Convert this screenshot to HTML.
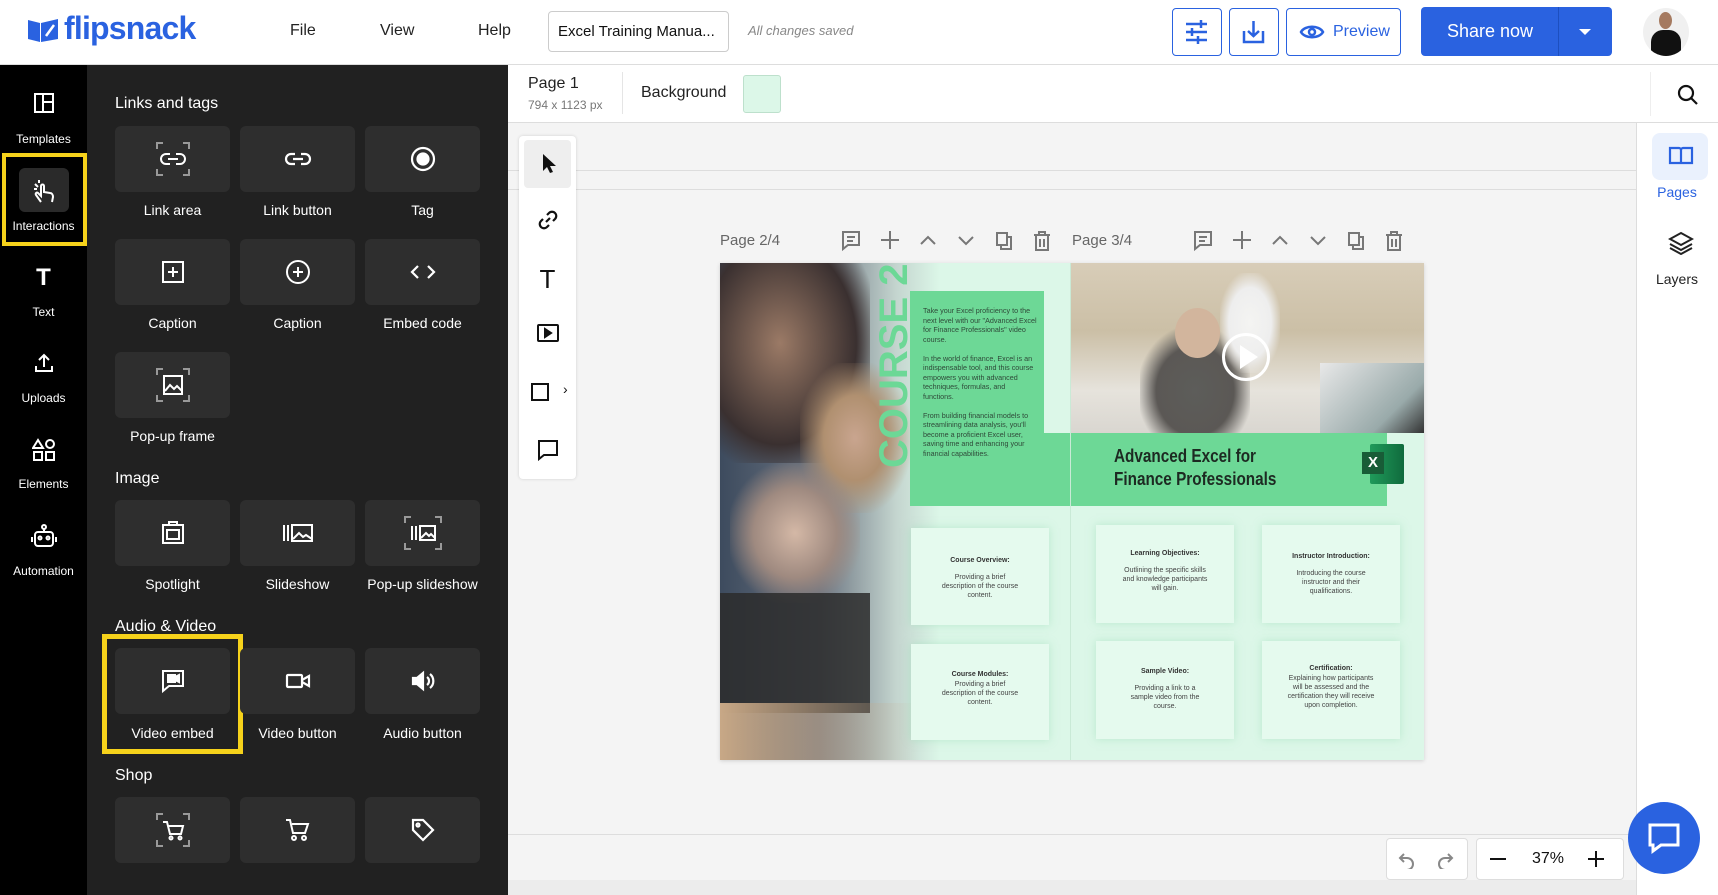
<!DOCTYPE html>
<html><head><meta charset="utf-8"><style>
*{box-sizing:border-box;margin:0;padding:0}
body{width:1718px;height:895px;overflow:hidden;font-family:"Liberation Sans",sans-serif;background:#f4f4f4;position:relative}
.abs{position:absolute}
.top{left:0;top:0;width:1718px;height:65px;background:#fff;border-bottom:1px solid #ddd}
.nav{font-size:16px;color:#222;top:22px}
.rail{left:0;top:65px;width:87px;height:830px;background:#000}
.ri{position:absolute;left:0;width:87px;text-align:center;color:#fff;font-size:12px}
.panel{left:87px;top:65px;width:421px;height:830px;background:#212121}
.h{position:absolute;left:28px;color:#fff;font-size:16px}
.tile{position:absolute;width:115px;height:66px;background:#2e2e2e;border-radius:6px;display:flex;align-items:center;justify-content:center}
.lbl{position:absolute;width:115px;text-align:center;color:#fff;font-size:14px}
.btn{border:1.5px solid #2a62e0;border-radius:4px;background:#fff}
.card{position:absolute;background:#e5faee;box-shadow:0 0 8px rgba(150,220,180,.5);text-align:center;font-size:7px;color:#444;padding-top:28px;line-height:9px}
.card b{display:block;margin-bottom:8px;color:#333}
.tool{position:absolute;left:0;width:57px;display:flex;justify-content:center}
</style></head><body>
<div class="abs top"></div>
<svg class="abs" style="left:27px;top:17px" width="34" height="26" viewBox="0 0 34 26"><path d="M1 3 L13 6 L13 25 L1 22Z" fill="#2a62e0"/><path d="M14 6 L31 2 L31 22 L14 25Z" fill="#2a62e0"/><path d="M19 19 L27 8" stroke="#fff" stroke-width="2.5"/></svg>
<div class="abs" style="left:64px;top:10px;font-size:32px;font-weight:bold;color:#2a62e0;letter-spacing:-0.8px">flipsnack</div>
<div class="abs nav" style="left:290px">File</div>
<div class="abs nav" style="left:380px">View</div>
<div class="abs nav" style="left:478px">Help</div>
<div class="abs" style="left:548px;top:11px;width:181px;height:41px;border:1px solid #ccc;border-radius:4px;font-size:15px;padding:11px 9px;color:#111">Excel Training Manua...</div>
<div class="abs" style="left:748px;top:23px;font-size:13px;color:#888;font-style:italic">All changes saved</div>
<div class="abs btn" style="left:1172px;top:8px;width:50px;height:48px"><svg width="47" height="45" viewBox="0 0 47 45"><g stroke="#2a62e0" stroke-width="2.5"><path d="M13 15h21M13 23h21M13 31h21"/><path d="M28 11v8M19 19v8M25 27v8"/></g></svg></div>
<div class="abs btn" style="left:1229px;top:8px;width:50px;height:48px"><svg width="47" height="45" viewBox="0 0 47 45" fill="none" stroke="#2a62e0" stroke-width="2.5"><path d="M14 22v11h19V22M23.5 12v15M18 22l5.5 5 5.5-5"/></svg></div>
<div class="abs btn" style="left:1286px;top:8px;width:115px;height:48px"><svg class="abs" style="left:12px;top:13px" width="26" height="20" viewBox="0 0 26 20" fill="none" stroke="#2a62e0" stroke-width="2.5"><path d="M2 10C6 3 20 3 24 10C20 17 6 17 2 10Z"/><circle cx="13" cy="10" r="3"/></svg><span class="abs" style="left:46px;top:14px;color:#2a62e0;font-size:16px">Preview</span></div>
<div class="abs" style="left:1421px;top:7px;width:191px;height:49px;background:#2a62e0;border-radius:4px"><span class="abs" style="left:26px;top:14px;color:#fff;font-size:18px">Share now</span><div class="abs" style="left:137px;top:0;width:1px;height:49px;background:#1d4fc0"></div><div class="abs" style="left:158px;top:22px;border:6px solid transparent;border-top:6px solid #fff;border-bottom:0"></div></div>
<div class="abs" style="left:1643px;top:8px;width:46px;height:48px;border-radius:50%;background:#f0f0f0;overflow:hidden"><div class="abs" style="left:16px;top:4px;width:13px;height:17px;border-radius:50%;background:#a57a60"></div><div class="abs" style="left:8px;top:22px;width:30px;height:30px;border-radius:12px 12px 0 0;background:#111"></div></div>

<div class="abs rail"></div>
<div class="ri" style="top:92px"><svg width="22" height="22" viewBox="0 0 22 22" fill="none" stroke="#fff" stroke-width="2"><rect x="2" y="2" width="18" height="18"/><path d="M10 2v18M10 10h10"/></svg></div>
<div class="ri" style="top:132px">Templates</div>
<div class="abs" style="left:2px;top:153px;width:85px;height:93px;border:4px solid #f6d21b"></div>
<div class="abs" style="left:19px;top:168px;width:50px;height:44px;background:#2a2a2a;border-radius:6px"></div>
<div class="ri" style="top:178px"><svg width="28" height="26" viewBox="0 0 28 26" fill="none" stroke="#fff" stroke-width="2"><path d="M11 24l-5-7c-1-2 1-3 2-2l3 3V8c0-2 3-2 3 0v6l6 1c2 0 3 2 3 4l-1 5"/><path d="M5 6l3 3M4 11h3M9 2v3"/></svg></div>
<div class="ri" style="top:219px">Interactions</div>
<div class="ri" style="top:264px;font-size:24px;font-weight:bold">T</div>
<div class="ri" style="top:305px">Text</div>
<div class="ri" style="top:352px"><svg width="22" height="22" viewBox="0 0 22 22" fill="none" stroke="#fff" stroke-width="2"><path d="M3 14v5h16v-5M11 3v12M6 8l5-5 5 5"/></svg></div>
<div class="ri" style="top:391px">Uploads</div>
<div class="ri" style="top:438px"><svg width="24" height="24" viewBox="0 0 24 24" fill="none" stroke="#fff" stroke-width="2"><path d="M6 2l5 8H1z"/><circle cx="18" cy="6" r="4"/><rect x="2" y="14" width="8" height="8"/><rect x="14" y="14" width="8" height="8"/></svg></div>
<div class="ri" style="top:477px">Elements</div>
<div class="ri" style="top:523px"><svg width="26" height="26" viewBox="0 0 26 26" fill="none" stroke="#fff" stroke-width="2"><rect x="4" y="9" width="18" height="14" rx="3"/><circle cx="13" cy="4" r="2"/><path d="M13 6v3M1 14v5M25 14v5"/><circle cx="9" cy="15" r="1.5"/><circle cx="17" cy="15" r="1.5"/></svg></div>
<div class="ri" style="top:564px">Automation</div>

<div class="abs panel">
<div class="h" style="top:30px">Links and tags</div>
<div class="tile" style="left:28px;top:61px"><svg width="40" height="40" viewBox="0 0 40 40" fill="none" stroke="#fff" stroke-width="2"><path d="M4 10V4h6M30 4h6v6M36 30v6h-6M10 36H4v-6" stroke="#999"/><path d="M17 15h-4a5 5 0 0 0 0 10h4M23 15h4a5 5 0 0 1 0 10h-4M15 20h10"/></svg></div>
<div class="tile" style="left:153px;top:61px"><svg width="30" height="20" viewBox="0 0 30 20" fill="none" stroke="#fff" stroke-width="2.2"><path d="M12 5H8a5 5 0 0 0 0 10h4M18 5h4a5 5 0 0 1 0 10h-4M10 10h10"/></svg></div>
<div class="tile" style="left:278px;top:61px"><svg width="28" height="28" viewBox="0 0 28 28" fill="none" stroke="#fff" stroke-width="2.2"><circle cx="14" cy="14" r="11"/><circle cx="14" cy="14" r="5.5" fill="#fff"/></svg></div>
<div class="lbl" style="left:28px;top:137px">Link area</div><div class="lbl" style="left:153px;top:137px">Link button</div><div class="lbl" style="left:278px;top:137px">Tag</div>
<div class="tile" style="left:28px;top:174px"><svg width="24" height="24" viewBox="0 0 24 24" fill="none" stroke="#fff" stroke-width="2"><rect x="2" y="2" width="20" height="20"/><path d="M12 7v10M7 12h10"/></svg></div>
<div class="tile" style="left:153px;top:174px"><svg width="26" height="26" viewBox="0 0 26 26" fill="none" stroke="#fff" stroke-width="2"><circle cx="13" cy="13" r="11"/><path d="M13 8v10M8 13h10"/></svg></div>
<div class="tile" style="left:278px;top:174px"><svg width="26" height="20" viewBox="0 0 26 20" fill="none" stroke="#fff" stroke-width="2.2"><path d="M8 4L2 10l6 6M18 4l6 6-6 6"/></svg></div>
<div class="lbl" style="left:28px;top:250px">Caption</div><div class="lbl" style="left:153px;top:250px">Caption</div><div class="lbl" style="left:278px;top:250px">Embed code</div>
<div class="tile" style="left:28px;top:287px"><svg width="40" height="40" viewBox="0 0 40 40" fill="none" stroke="#fff" stroke-width="2"><path d="M4 10V4h6M30 4h6v6M36 30v6h-6M10 36H4v-6" stroke="#999"/><rect x="11" y="11" width="18" height="18"/><path d="M12 26l5-6 4 4 3-3 5 5"/></svg></div>
<div class="lbl" style="left:28px;top:363px">Pop-up frame</div>
<div class="h" style="top:405px">Image</div>
<div class="tile" style="left:28px;top:435px"><svg width="26" height="26" viewBox="0 0 26 26" fill="none" stroke="#fff" stroke-width="2"><rect x="3" y="5" width="20" height="18"/><rect x="7" y="10" width="12" height="9"/><path d="M9 5V2h8v3"/></svg></div>
<div class="tile" style="left:153px;top:435px"><svg width="32" height="22" viewBox="0 0 32 22" fill="none" stroke="#fff" stroke-width="2"><path d="M2 3v16M6 3v16"/><rect x="10" y="3" width="20" height="16"/><path d="M11 17l6-6 4 4 3-2 6 4"/></svg></div>
<div class="tile" style="left:278px;top:435px"><svg width="44" height="40" viewBox="0 0 44 40" fill="none" stroke="#fff" stroke-width="2"><path d="M4 10V4h6M34 4h6v6M40 30v6h-6M10 36H4v-6" stroke="#999"/><path d="M11 13v14M15 13v14"/><rect x="19" y="13" width="15" height="14"/><path d="M20 25l5-5 3 3 2-2 4 4"/></svg></div>
<div class="lbl" style="left:28px;top:511px">Spotlight</div><div class="lbl" style="left:153px;top:511px">Slideshow</div><div class="lbl" style="left:278px;top:511px">Pop-up slideshow</div>
<div class="h" style="top:553px">Audio &amp; Video</div>
<div class="abs" style="left:15px;top:569px;width:141px;height:120px;border:5px solid #f6d21b"></div>
<div class="tile" style="left:28px;top:583px"><svg width="26" height="26" viewBox="0 0 26 26" fill="none" stroke="#fff" stroke-width="2"><path d="M3 3h20v15H9l-6 5z"/><path d="M8 7h7v7H8zM15 9l4-2v7l-4-2" fill="#fff"/></svg></div>
<div class="tile" style="left:153px;top:583px"><svg width="26" height="18" viewBox="0 0 26 18" fill="none" stroke="#fff" stroke-width="2.2"><rect x="2" y="3" width="15" height="12" rx="1"/><path d="M17 8l7-4v10l-7-4"/></svg></div>
<div class="tile" style="left:278px;top:583px"><svg width="26" height="22" viewBox="0 0 26 22" fill="none" stroke="#fff" stroke-width="2.2"><path d="M3 8h4l6-5v16l-6-5H3z" fill="#fff"/><path d="M17 7a5 5 0 0 1 0 8M20 4a9 9 0 0 1 0 14"/></svg></div>
<div class="lbl" style="left:28px;top:660px">Video embed</div><div class="lbl" style="left:153px;top:660px">Video button</div><div class="lbl" style="left:278px;top:660px">Audio button</div>
<div class="h" style="top:702px">Shop</div>
<div class="tile" style="left:28px;top:732px"><svg width="40" height="40" viewBox="0 0 40 40" fill="none" stroke="#fff" stroke-width="2"><path d="M4 10V4h6M30 4h6v6M36 30v6h-6M10 36H4v-6" stroke="#999"/><path d="M10 12h4l3 12h11l2-8H15"/><circle cx="18" cy="28" r="1.5"/><circle cx="27" cy="28" r="1.5"/></svg></div>
<div class="tile" style="left:153px;top:732px"><svg width="28" height="26" viewBox="0 0 28 26" fill="none" stroke="#fff" stroke-width="2"><path d="M2 3h4l3 13h12l3-9H8"/><circle cx="10" cy="21" r="2"/><circle cx="20" cy="21" r="2"/></svg></div>
<div class="tile" style="left:278px;top:732px"><svg width="26" height="26" viewBox="0 0 26 26" fill="none" stroke="#fff" stroke-width="2.2"><path d="M3 3h10l10 10-10 10L3 13z"/><circle cx="8" cy="8" r="1.5"/></svg></div>
</div>

<div class="abs" style="left:508px;top:65px;width:1210px;height:58px;background:#fff;border-bottom:1px solid #ddd"></div>
<div class="abs" style="left:528px;top:75px;font-size:16px;color:#222">Page 1</div>
<div class="abs" style="left:528px;top:98px;font-size:12px;color:#777">794 x 1123 px</div>
<div class="abs" style="left:622px;top:72px;width:1px;height:42px;background:#e5e5e5"></div>
<div class="abs" style="left:641px;top:84px;font-size:16px;color:#222">Background</div>
<div class="abs" style="left:743px;top:75px;width:38px;height:38px;background:#dcf7e8;border:1px solid #bde0cc;border-radius:3px"></div>
<div class="abs" style="left:1650px;top:72px;width:1px;height:44px;background:#eee"></div>
<svg class="abs" style="left:1677px;top:84px" width="22" height="22" viewBox="0 0 22 22" fill="none" stroke="#111" stroke-width="2.2"><circle cx="9" cy="9" r="7"/><path d="M14 14l6 6"/></svg>
<div class="abs" style="left:508px;top:170px;width:1128px;height:1px;background:#ddd"></div>
<div class="abs" style="left:508px;top:189px;width:1128px;height:1px;background:#ddd"></div>
<div class="abs" style="left:508px;top:834px;width:1128px;height:1px;background:#ddd"></div>
<div class="abs" style="left:508px;top:880px;width:1128px;height:15px;background:#ececec"></div>
<div class="abs" style="left:1636px;top:123px;width:82px;height:772px;background:#fff;border-left:1px solid #ddd"></div>
<div class="abs" style="left:1652px;top:133px;width:56px;height:47px;background:#eaf1fd;border-radius:8px"></div>
<svg class="abs" style="left:1668px;top:146px" width="26" height="20" viewBox="0 0 26 20" fill="none" stroke="#2a62e0" stroke-width="2.2"><path d="M2 2h9c1 0 2 1 2 2v13H2zM24 2h-9c-1 0-2 1-2 2v13h11z"/></svg>
<div class="abs" style="left:1636px;top:184px;width:82px;text-align:center;font-size:14px;color:#2a62e0">Pages</div>
<svg class="abs" style="left:1668px;top:231px" width="26" height="24" viewBox="0 0 26 24" fill="none" stroke="#222" stroke-width="2"><path d="M13 2l11 6-11 6L2 8z"/><path d="M2 13l11 6 11-6M2 17l11 6 11-6"/></svg>
<div class="abs" style="left:1636px;top:271px;width:82px;text-align:center;font-size:14px;color:#222">Layers</div>

<div class="abs" style="left:519px;top:136px;width:57px;height:343px;background:#fff;border-radius:4px;box-shadow:0 0 3px rgba(0,0,0,.15)">
<div class="abs" style="left:5px;top:4px;width:47px;height:48px;background:#eee;border-radius:4px"></div>
<div class="tool" style="top:16px"><svg width="18" height="22" viewBox="0 0 18 22"><path d="M4 2v17l4-4 3 6 3-1-3-6h6z" fill="#111"/></svg></div>
<div class="tool" style="top:73px"><svg width="22" height="22" viewBox="0 0 22 22" fill="none" stroke="#111" stroke-width="2.2"><path d="M9 13l4-4M10 6l2-2a4 4 0 0 1 6 6l-2 2M12 16l-2 2a4 4 0 0 1-6-6l2-2"/></svg></div>
<div class="tool" style="top:128px;font-size:26px;color:#111">T</div>
<div class="tool" style="top:188px"><svg width="22" height="18" viewBox="0 0 22 18" fill="none" stroke="#111" stroke-width="2"><rect x="1" y="1" width="20" height="16" rx="1"/><path d="M8 5v8l6-4z" fill="#111"/></svg></div>
<div class="abs" style="left:12px;top:247px;width:18px;height:18px;border:2px solid #111"></div>
<div class="abs" style="left:44px;top:245px;font-size:14px;color:#111">›</div>
<div class="tool" style="top:303px"><svg width="22" height="22" viewBox="0 0 22 22" fill="none" stroke="#111" stroke-width="2"><path d="M2 2h18v14H7l-5 4z"/></svg></div>
</div>

<div class="abs" style="left:720px;top:232px;font-size:15px;color:#666">Page 2/4</div>
<div class="abs" style="left:1072px;top:232px;font-size:15px;color:#666">Page 3/4</div>
<svg class="abs" style="left:840px;top:228px" width="225" height="26" viewBox="0 0 225 26" fill="none" stroke="#777" stroke-width="2"><path d="M3 4h16v13H8l-5 4zM7 9h8M7 13h6"/><path d="M50 3v18M41 12h18"/><path d="M81 16l7-7 7 7"/><path d="M119 9l7 7 7-7"/><path d="M157 5h10v12h-10zM161 17v4h10V9h-4"/><path d="M194 7h16M199 7V4h6v3M196 7v15h12V7M200 11v8M204 11v8"/></svg>
<svg class="abs" style="left:1192px;top:228px" width="225" height="26" viewBox="0 0 225 26" fill="none" stroke="#777" stroke-width="2"><path d="M3 4h16v13H8l-5 4zM7 9h8M7 13h6"/><path d="M50 3v18M41 12h18"/><path d="M81 16l7-7 7 7"/><path d="M119 9l7 7 7-7"/><path d="M157 5h10v12h-10zM161 17v4h10V9h-4"/><path d="M194 7h16M199 7V4h6v3M196 7v15h12V7M200 11v8M204 11v8"/></svg>

<div class="abs" style="left:720px;top:263px;width:704px;height:497px;background:#dcf7e8;box-shadow:0 1px 4px rgba(0,0,0,.15);overflow:hidden">
 <div class="abs" style="left:0;top:0;width:220px;height:497px;background:linear-gradient(90deg,#3d4b5e 0%,#6a7380 45%,rgba(180,190,190,.6) 80%,rgba(220,247,232,0) 100%)"></div>
 <div class="abs" style="left:0;top:0;width:150px;height:200px;background:radial-gradient(ellipse at 40% 40%,#9b7a66 0%,#3a3030 60%,transparent 80%)"></div>
 <div class="abs" style="left:80px;top:100px;width:110px;height:150px;background:radial-gradient(ellipse,#c9a58f 0%,#b09070 40%,transparent 75%)"></div>
 <div class="abs" style="left:10px;top:200px;width:130px;height:140px;background:radial-gradient(ellipse,#d4b8a6 0%,#9f8a80 45%,transparent 75%)"></div>
 <div class="abs" style="left:0;top:330px;width:150px;height:120px;background:#2b2b2b;opacity:.85"></div>
 <div class="abs" style="left:0;top:440px;width:200px;height:57px;background:linear-gradient(90deg,#c8a886,rgba(220,247,232,0))"></div>
 <div class="abs" style="left:156px;top:205px;transform:rotate(-90deg);transform-origin:0 0;font-size:40px;font-weight:bold;color:#6cd896;white-space:nowrap;line-height:36px">COURSE 2</div>
 <div class="abs" style="left:190px;top:28px;width:134px;height:215px;background:#6dd896"></div>
 <div class="abs" style="left:190px;top:170px;width:161px;height:73px;background:#6dd896"></div>
 <div class="abs" style="left:203px;top:43px;width:115px;font-size:7.2px;color:#2f4a39;line-height:9.5px">Take your Excel proficiency to the next level with our "Advanced Excel for Finance Professionals" video course.<br><br>In the world of finance, Excel is an indispensable tool, and this course empowers you with advanced techniques, formulas, and functions.<br><br>From building financial models to streamlining data analysis, you'll become a proficient Excel user, saving time and enhancing your financial capabilities.</div>
 <div class="abs" style="left:350px;top:0;width:1px;height:497px;background:#c9ead6"></div>
 <div class="abs" style="left:351px;top:0;width:353px;height:170px;background:linear-gradient(180deg,#d8cdb8 0%,#cbbfa6 40%,#e6e3dc 75%,#d9d6d0 100%)"></div>
 <div class="abs" style="left:420px;top:65px;width:110px;height:105px;background:radial-gradient(ellipse at 50% 60%,#5d5d5a 0%,#5b5855 50%,transparent 75%)"></div>
 <div class="abs" style="left:455px;top:45px;width:45px;height:50px;border-radius:50%;background:#d2b59d"></div>
 <div class="abs" style="left:500px;top:10px;width:60px;height:100px;background:radial-gradient(ellipse,#f4f4f2 0%,#eee 50%,transparent 75%)"></div>
 <div class="abs" style="left:600px;top:100px;width:104px;height:70px;background:linear-gradient(135deg,#e8e8e8,#9aa 70%,#333)"></div>
 <div class="abs" style="left:502px;top:70px;width:48px;height:48px;border:3px solid #fff;border-radius:50%"></div>
 <div class="abs" style="left:520px;top:82px;width:0;height:0;border-left:18px solid #fff;border-top:12px solid transparent;border-bottom:12px solid transparent"></div>
 <div class="abs" style="left:351px;top:170px;width:316px;height:73px;background:#6dd896"></div>
 <div class="abs" style="left:394px;top:182px;font-size:18px;font-weight:bold;color:#1d2a22;line-height:23px;transform:scaleX(.85);transform-origin:0 0;width:240px">Advanced Excel for<br>Finance Professionals</div>
 <div class="abs" style="left:650px;top:181px;width:34px;height:40px;background:linear-gradient(90deg,#1f9a5a,#106b3d);border-radius:2px"></div>
 <div class="abs" style="left:642px;top:189px;width:22px;height:22px;background:#185c37;color:#fff;font-size:15px;font-weight:bold;text-align:center;line-height:22px">X</div>
 <div class="card" style="left:191px;top:265px;width:138px;height:97px"><b>Course Overview:</b>Providing a brief<br>description of the course<br>content.</div>
 <div class="card" style="left:191px;top:381px;width:138px;height:96px;padding-top:26px"><b style="margin-bottom:1px">Course Modules:</b>Providing a brief<br>description of the course<br>content.</div>
 <div class="card" style="left:376px;top:262px;width:138px;height:98px;padding-top:24px"><b>Learning Objectives:</b>Outlining the specific skills<br>and knowledge participants<br>will gain.</div>
 <div class="card" style="left:542px;top:262px;width:138px;height:98px;padding-top:27px"><b>Instructor Introduction:</b>Introducing the course<br>instructor and their<br>qualifications.</div>
 <div class="card" style="left:376px;top:378px;width:138px;height:98px;padding-top:26px"><b>Sample Video:</b>Providing a link to a<br>sample video from the<br>course.</div>
 <div class="card" style="left:542px;top:378px;width:138px;height:98px;padding-top:23px"><b style="margin-bottom:1px">Certification:</b>Explaining how participants<br>will be assessed and the<br>certification they will receive<br>upon completion.</div>
</div>

<div class="abs" style="left:1386px;top:838px;width:82px;height:42px;background:#fff;border:1px solid #ddd;border-radius:4px"></div>
<svg class="abs" style="left:1398px;top:849px" width="60" height="20" viewBox="0 0 60 20" fill="none" stroke="#888" stroke-width="2"><path d="M6 5L2 9l4 4M2 9h7a6 6 0 0 1 0 12"/><path d="M50 5l4 4-4 4M54 9h-7a6 6 0 0 0 0 12"/></svg>
<div class="abs" style="left:1476px;top:838px;width:148px;height:42px;background:#fff;border:1px solid #ddd;border-radius:4px"></div>
<div class="abs" style="left:1490px;top:858px;width:16px;height:2px;background:#111"></div>
<div class="abs" style="left:1532px;top:850px;font-size:16px;color:#111">37%</div>
<div class="abs" style="left:1588px;top:858px;width:16px;height:2px;background:#111"></div>
<div class="abs" style="left:1595px;top:851px;width:2px;height:16px;background:#111"></div>
<div class="abs" style="left:1628px;top:802px;width:72px;height:72px;border-radius:50%;background:#2a62e0"></div>
<svg class="abs" style="left:1647px;top:822px" width="34" height="32" viewBox="0 0 34 32" fill="none" stroke="#fff" stroke-width="3"><path d="M3 3h28v20H14l-8 6v-6H3z"/></svg>
</body></html>
